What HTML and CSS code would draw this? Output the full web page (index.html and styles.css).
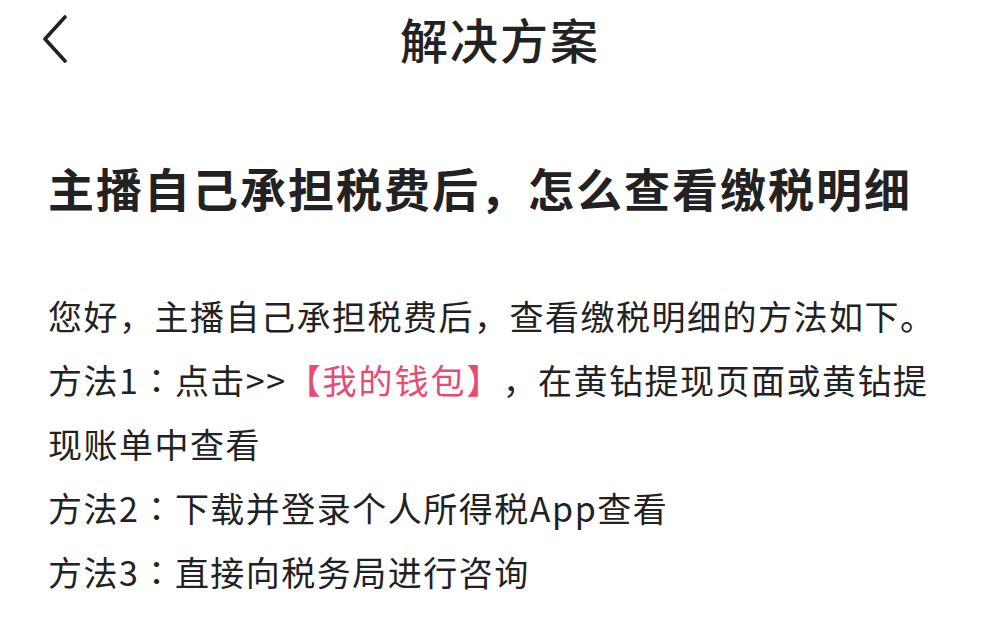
FILE: index.html
```html
<!DOCTYPE html>
<html lang="zh-CN">
<head>
<meta charset="utf-8">
<title>解决方案</title>
<link rel="stylesheet" href="styles.css">
</head>
<body>
<header class="nav">
  <button class="nav-back" aria-label="返回">
    <svg width="30" height="50" viewBox="0 0 30 50">
      <polyline points="23,4 3,26 23,48" fill="none" stroke="#222" stroke-width="3.6" stroke-linecap="round" stroke-linejoin="round"/>
    </svg>
  </button>
  <h1 class="nav-title">解决方案</h1>
  <span class="nav-spacer"></span>
</header>
<main class="article">
  <h2 class="question">主播自己承担税费后，怎么查看缴税明细</h2>
  <div class="answer">
    <p>您好，主播自己承担税费后，查看缴税明细的方法如下。</p>
    <p>方法1<span class="colon" lang="zh-TW">：</span>点击&gt;&gt;<a class="link" href="#">【我的钱包】</a>，在黄钻提现页面或黄钻提现账单中查看</p>
    <p>方法2<span class="colon" lang="zh-TW">：</span>下载并登录个人所得税App查看</p>
    <p>方法3<span class="colon" lang="zh-TW">：</span>直接向税务局进行咨询</p>
  </div>
</main>
</body>
</html>
```
FILE: styles.css
```css
html, body {
  margin: 0;
  padding: 0;
  background: #fff;
}

body {
  font-family: "Noto Sans CJK SC", "Noto Sans", sans-serif;
  color: #222;
  width: 1000px;
  height: 631px;
  overflow: hidden;
  text-spacing-trim: space-all;
}

.nav {
  display: grid;
  grid-template-columns: 1fr auto 1fr;
  align-items: center;
  height: 76px;
  padding: 0 40px;
}

.nav-back {
  justify-self: start;
  display: flex;
  align-items: center;
  padding: 0;
  margin: 0 0 0 2px;
  border: 0;
  background: none;
}

.nav-title {
  margin: 0;
  font-size: 48px;
  font-weight: 500;
  line-height: 1;
  letter-spacing: 2px;
}

.article {
  padding: 79px 48px 0;
}

.question {
  margin: 0;
  font-size: 46px;
  font-weight: 600;
  line-height: 64px;
  letter-spacing: 2px;
}

.answer {
  margin-top: 65px;
  font-size: 34px;
  line-height: 64px;
  letter-spacing: 1.5px;
}

.answer p {
  margin: 0;
}

/* centred full-width colon, as in traditional-style punctuation */
.colon {
  font-family: "Noto Sans CJK TC", "Noto Sans CJK SC", sans-serif;
}

.link {
  color: #eb4a70;
  text-decoration: none;
  letter-spacing: 2px;
}
```
